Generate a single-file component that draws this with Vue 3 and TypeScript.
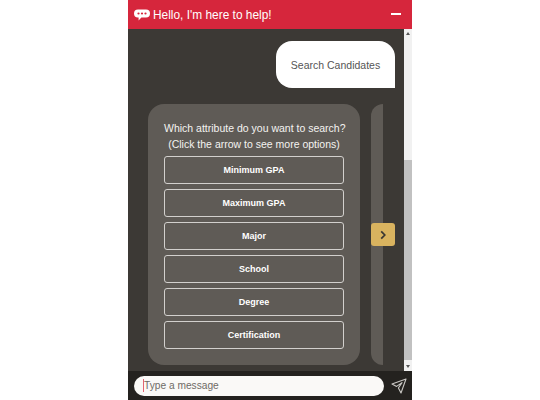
<script setup lang="ts">
const options: string[] = ['Minimum GPA', 'Maximum GPA', 'Major', 'School', 'Degree', 'Certification']
</script>

<template>
  <div class="page">
    <div class="widget">
      <header class="header">
        <svg class="logo" width="16" height="12" viewBox="0 0 16 12">
          <path d="M4 .5h8a4 4 0 0 1 0 8H7.4L4.6 11.5V8.5H4a4 4 0 0 1 0-8z" fill="#fff" />
          <circle cx="4.5" cy="4.5" r="1.1" fill="#d7263d" />
          <circle cx="8" cy="4.5" r="1.1" fill="#d7263d" />
          <circle cx="11.5" cy="4.5" r="1.1" fill="#d7263d" />
        </svg>
        <span class="title">Hello, I'm here to help!</span>
        <span class="minimize"></span>
      </header>
      <div class="body">
        <main class="messages">
          <div class="bubble">Search Candidates</div>
          <div class="carousel">
            <section class="card">
              <p class="prompt">Which attribute do you want to search?<br />(Click the arrow to see more options)</p>
              <div class="options">
                <button v-for="o in options" :key="o" class="option">{{ o }}</button>
              </div>
            </section>
            <div class="peek"></div>
            <button class="next" aria-label="Next">
              <svg width="8" height="10" viewBox="0 0 8 10">
                <path d="M2.2 1.3 5.8 5 2.2 8.7" fill="none" stroke="#3a3733" stroke-width="1.7" />
              </svg>
            </button>
          </div>
        </main>
        <div class="scrollbar">
          <span class="arrow up"></span>
          <div class="track"><div class="thumb"></div></div>
          <span class="arrow down"></span>
        </div>
      </div>
      <footer class="footer">
        <div class="input"><span class="caret"></span>Type a message</div>
        <svg class="send" width="16" height="16" viewBox="0 0 16 16">
          <path d="M15 1 1 6l4.6 2.4L11 4.6 7.4 10 10 15z" fill="none" stroke="#c9c7c3" stroke-width="1.1" stroke-linejoin="round" />
        </svg>
      </footer>
    </div>
  </div>
</template>

<style>
html, body { margin: 0; background: #fff; }
</style>

<style scoped>
.page { display: flex; justify-content: center; width: 540px; height: 400px; font-family: "Liberation Sans", Arial, sans-serif; }
.widget { width: 284px; height: 400px; display: flex; flex-direction: column; background: #3c3935; }
.header { height: 29px; flex: none; background: #d6263c; display: flex; align-items: center; padding: 0 11px 0 6px; color: #fff; box-sizing: border-box; }
.logo { flex: none; margin-right: 3px; }
.title { font-size: 11.9px; flex: 1; }
.minimize { width: 10px; height: 2px; background: #fff; margin-top: -2px; }
.body { flex: 1; min-height: 0; display: flex; }
.messages { flex: 1; min-width: 0; padding: 12px 9px 0 20px; display: flex; flex-direction: column; }
.bubble { align-self: flex-end; width: 119px; height: 47px; box-sizing: border-box; background: #fff; color: #555; font-size: 10.5px; display: flex; align-items: center; justify-content: center; border-radius: 16px 16px 0 16px; }
.carousel { position: relative; display: flex; gap: 11px; margin-top: 16px; height: 261px; }
.card { width: 212px; flex: none; box-sizing: border-box; height: 261px; background: #5f5b56; border-radius: 16px; padding: 16px 16px 0; }
.prompt { margin: 0; color: #f4f3f1; font-size: 10.5px; line-height: 16px; text-align: center; white-space: nowrap; }
.options { display: flex; flex-direction: column; gap: 5px; margin-top: 4px; }
.option { height: 28px; border: 1px solid #d2d0cd; border-radius: 3px; background: transparent; color: #fff; font: bold 9px "Liberation Sans", Arial, sans-serif; padding: 0; }
.peek { width: 12px; flex: none; height: 261px; background: #5f5b56; border-radius: 16px 0 0 16px; }
.next { position: absolute; left: 223px; top: 119px; width: 24px; height: 23px; padding: 0; border: 0; border-radius: 3px; background: #d9b35f; display: flex; align-items: center; justify-content: center; }
.scrollbar { width: 8px; flex: none; background: #f1f1f1; display: flex; flex-direction: column; align-items: center; }
.track { flex: 1; width: 100%; padding-top: 122px; box-sizing: border-box; }
.thumb { height: 200px; background: #c1c1c1; }
.arrow { width: 0; height: 0; border-left: 2.5px solid transparent; border-right: 2.5px solid transparent; margin: 3px 0; flex: none; }
.up { border-bottom: 3px solid #555; }
.down { border-top: 3px solid #555; }
.footer { height: 29px; flex: none; background: #24221f; display: flex; align-items: center; padding: 0 6px; box-sizing: border-box; gap: 7px; }
.input { width: 250px; height: 20px; flex: none; box-sizing: border-box; border-radius: 10px; background: #faf9f7; color: #6f6b66; font-size: 10.2px; display: flex; align-items: center; padding-left: 9px; }
.caret { width: 1px; height: 13px; background: #d7263d; flex: none; opacity: .7; }
.send { flex: none; }
</style>
